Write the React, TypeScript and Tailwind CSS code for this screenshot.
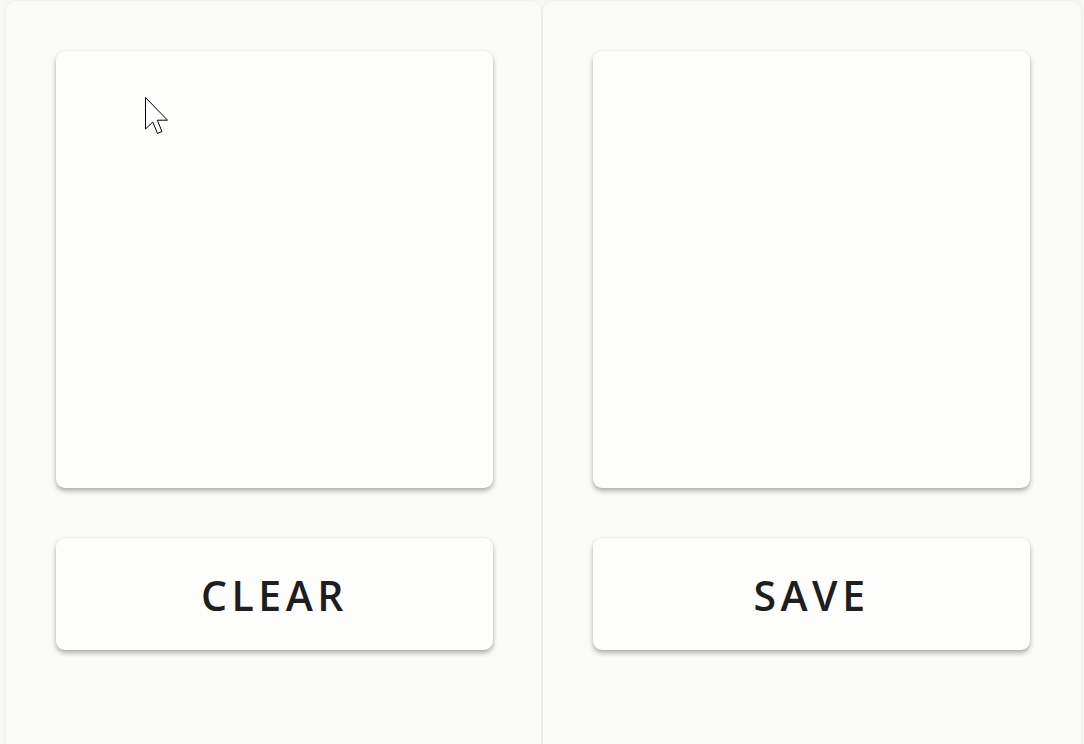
function Panel({ label, cursor, wide }: { label: string; cursor?: boolean; wide?: boolean }) {
  return (
    <div
      className={`relative flex h-[760px] flex-col gap-[50px] rounded-[10px] bg-[#fafaf9] pl-[50px] pt-[50px] shadow-[0_0_3px_rgba(0,0,0,0.09)] ${
        wide ? "flex-1" : "w-[535px]"
      }`}
    >
      <div className="h-[437px] w-[437px] rounded-[9px] bg-[#fdfdfc] shadow-[0_3px_5px_rgba(0,0,0,0.3),0_0_3px_rgba(0,0,0,0.05)]" />
      <button
        type="button"
        className="flex h-[112px] w-[437px] items-center justify-center rounded-[9px] bg-[#fdfdfc] pt-[4px] text-[41px] font-semibold tracking-[0.11em] text-[#1e1e1e] shadow-[0_3px_5px_rgba(0,0,0,0.3),0_0_3px_rgba(0,0,0,0.05)]"
        style={{ fontFamily: '"Open Sans", "Noto Sans", sans-serif' }}
      >
        {label}
      </button>
      {cursor && (
        <svg className="absolute left-[138px] top-[95px]" width="26" height="40" viewBox="0 0 26 40">
          <path
            d="M1.5 1.5 L1.5 33 L8.8 26 L13.5 37.5 L18 35.5 L13.3 24.2 L23.5 24.2 Z"
            fill="#fff"
            stroke="#000"
            strokeWidth="1"
          />
        </svg>
      )}
    </div>
  );
}

export default function App() {
  return (
    <div className="flex h-[744px] gap-[2px] overflow-hidden bg-[#f7f7f6] pl-[6px] pr-[3px] pt-[1px]">
      <Panel label="CLEAR" cursor />
      <Panel label="SAVE" wide />
    </div>
  );
}
